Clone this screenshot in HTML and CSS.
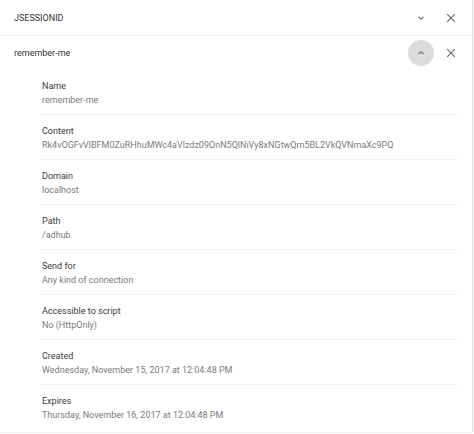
FILE: index.html
```html
<!DOCTYPE html>
<html lang="en">
<head>
  <meta charset="UTF-8" />
  <title>Cookies</title>
  <link rel="stylesheet" href="styles.css">
</head>
<body>
  <div class="cookie-list">
    <!-- Collapsed cookie -->
    <div class="cookie-row">
      <span class="cookie-name">JSESSIONID</span>
      <span class="icon-btn">
        <svg width="10" height="10" viewBox="0 0 10 10"><path d="M2.5 3.8 L5 6.3 L7.5 3.8" fill="none" stroke="#666" stroke-width="1.1"/></svg>
      </span>
      <span class="icon-btn">
        <svg width="10" height="10" viewBox="0 0 10 10"><path d="M1.2 1.2 L8.8 8.8 M8.8 1.2 L1.2 8.8" fill="none" stroke="#666" stroke-width="1.1"/></svg>
      </span>
    </div>

    <!-- Expanded cookie -->
    <div class="cookie-row open">
      <span class="cookie-name">remember-me</span>
      <span class="icon-btn active">
        <svg width="10" height="10" viewBox="0 0 10 10"><path d="M2.5 6.2 L5 3.7 L7.5 6.2" fill="none" stroke="#666" stroke-width="1.1"/></svg>
      </span>
      <span class="icon-btn">
        <svg width="10" height="10" viewBox="0 0 10 10"><path d="M1.2 1.2 L8.8 8.8 M8.8 1.2 L1.2 8.8" fill="none" stroke="#666" stroke-width="1.1"/></svg>
      </span>
    </div>

    <div class="details">
      <div class="detail">
        <div class="label">Name</div>
        <div class="value">remember-me</div>
      </div>
      <div class="detail">
        <div class="label">Content</div>
        <div class="value">Rk4vOGFvVlBFM0ZuRHhuMWc4aVlzdz09OnN5QlNiVy8xNGtwQm5BL2VkQVNmaXc9PQ</div>
      </div>
      <div class="detail">
        <div class="label">Domain</div>
        <div class="value">localhost</div>
      </div>
      <div class="detail">
        <div class="label">Path</div>
        <div class="value">/adhub</div>
      </div>
      <div class="detail">
        <div class="label">Send for</div>
        <div class="value">Any kind of connection</div>
      </div>
      <div class="detail">
        <div class="label">Accessible to script</div>
        <div class="value">No (HttpOnly)</div>
      </div>
      <div class="detail">
        <div class="label">Created</div>
        <div class="value">Wednesday, November 15, 2017 at 12:04:48 PM</div>
      </div>
      <div class="detail last">
        <div class="label">Expires</div>
        <div class="value">Thursday, November 16, 2017 at 12:04:48 PM</div>
      </div>
    </div>
  </div>
</body>
</html>
```

FILE: styles.css
```css
/* Basic reset */
* {
  margin: 0;
  padding: 0;
  box-sizing: border-box;
  font-family: Roboto, "Liberation Sans", sans-serif;
}

body {
  background-color: #ffffff;
  width: 474px;
  height: 434px;
  overflow: hidden;
}

.cookie-list {
  width: 473px;
  height: 433px;
  border-right: 1px solid #e2e2e2;
  border-bottom: 1px solid #eeeeee;
}

/* Cookie header rows */
.cookie-row {
  display: flex;
  align-items: center;
  height: 36px;
  padding: 0 8px 0 14px;
  gap: 4px;
  border-bottom: 1px solid #eeeeee;
}

.cookie-row.open {
  height: 34px;
  border-bottom: none;
}

.cookie-name {
  flex: 1;
  font-size: 9px;
  color: #333;
}

.icon-btn {
  width: 26px;
  height: 26px;
  border-radius: 50%;
  display: flex;
  align-items: center;
  justify-content: center;
}

.icon-btn.active {
  background-color: #dcdcdc;
}

/* Expanded details */
.details {
  margin: 0 14px 0 40px;
}

.detail {
  height: 45px;
  padding: 10px 2px 0;
  border-bottom: 1px solid #efefef;
  font-size: 9px;
  line-height: 13.5px;
}

.detail.last {
  border-bottom: none;
}

.label {
  color: #3a3a3a;
}

.value {
  color: #7a7a7a;
}
```
